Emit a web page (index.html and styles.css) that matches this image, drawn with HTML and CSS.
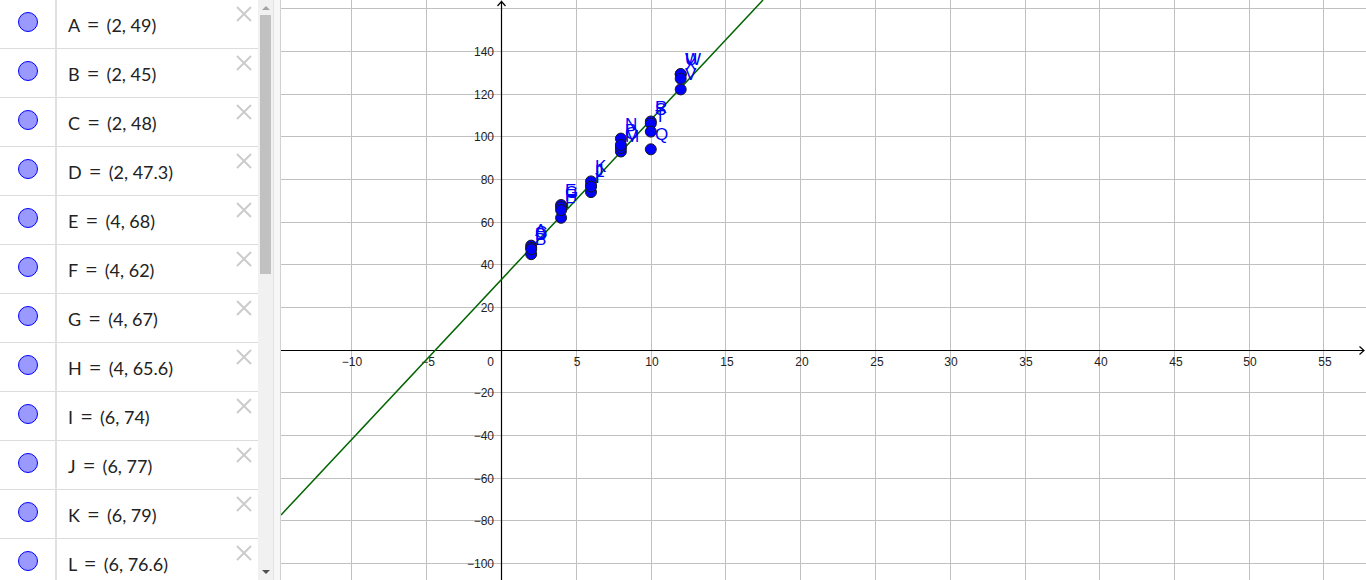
FILE: index.html
```html
<!DOCTYPE html>
<html lang="en">
<head>
<meta charset="utf-8">
<title>Scatter plot with best-fit line</title>
<link rel="stylesheet" href="styles.css">
</head>
<body>
<div class="app">
  <aside class="algebra">
    <ul class="list">
      <li class="row"><div class="marble-cell"><span class="marble"></span></div><div class="expr">A <i>=</i> (2, 49)</div><svg class="close" viewBox="0 0 16 16"><path d="M1 1L15 15M15 1L1 15"/></svg></li>
      <li class="row"><div class="marble-cell"><span class="marble"></span></div><div class="expr">B <i>=</i> (2, 45)</div><svg class="close" viewBox="0 0 16 16"><path d="M1 1L15 15M15 1L1 15"/></svg></li>
      <li class="row"><div class="marble-cell"><span class="marble"></span></div><div class="expr">C <i>=</i> (2, 48)</div><svg class="close" viewBox="0 0 16 16"><path d="M1 1L15 15M15 1L1 15"/></svg></li>
      <li class="row"><div class="marble-cell"><span class="marble"></span></div><div class="expr">D <i>=</i> (2, 47.3)</div><svg class="close" viewBox="0 0 16 16"><path d="M1 1L15 15M15 1L1 15"/></svg></li>
      <li class="row"><div class="marble-cell"><span class="marble"></span></div><div class="expr">E <i>=</i> (4, 68)</div><svg class="close" viewBox="0 0 16 16"><path d="M1 1L15 15M15 1L1 15"/></svg></li>
      <li class="row"><div class="marble-cell"><span class="marble"></span></div><div class="expr">F <i>=</i> (4, 62)</div><svg class="close" viewBox="0 0 16 16"><path d="M1 1L15 15M15 1L1 15"/></svg></li>
      <li class="row"><div class="marble-cell"><span class="marble"></span></div><div class="expr">G <i>=</i> (4, 67)</div><svg class="close" viewBox="0 0 16 16"><path d="M1 1L15 15M15 1L1 15"/></svg></li>
      <li class="row"><div class="marble-cell"><span class="marble"></span></div><div class="expr">H <i>=</i> (4, 65.6)</div><svg class="close" viewBox="0 0 16 16"><path d="M1 1L15 15M15 1L1 15"/></svg></li>
      <li class="row"><div class="marble-cell"><span class="marble"></span></div><div class="expr">I <i>=</i> (6, 74)</div><svg class="close" viewBox="0 0 16 16"><path d="M1 1L15 15M15 1L1 15"/></svg></li>
      <li class="row"><div class="marble-cell"><span class="marble"></span></div><div class="expr">J <i>=</i> (6, 77)</div><svg class="close" viewBox="0 0 16 16"><path d="M1 1L15 15M15 1L1 15"/></svg></li>
      <li class="row"><div class="marble-cell"><span class="marble"></span></div><div class="expr">K <i>=</i> (6, 79)</div><svg class="close" viewBox="0 0 16 16"><path d="M1 1L15 15M15 1L1 15"/></svg></li>
      <li class="row"><div class="marble-cell"><span class="marble"></span></div><div class="expr">L <i>=</i> (6, 76.6)</div><svg class="close" viewBox="0 0 16 16"><path d="M1 1L15 15M15 1L1 15"/></svg></li>
    </ul>
    <div class="scrollbar">
      <span class="arrow arrow-up"></span>
      <span class="thumb"></span>
      <span class="arrow arrow-down"></span>
    </div>
  </aside>
  <div class="splitter"></div>
  <main class="graphics">
    <svg class="plot" viewBox="281 0 1085 580">
      <path class="grid" d="M351.5 0V580M426.5 0V580M501.5 0V580M576.5 0V580M651.5 0V580M725.5 0V580M800.5 0V580M875.5 0V580M950.5 0V580M1025.5 0V580M1099.5 0V580M1174.5 0V580M1249.5 0V580M1323.5 0V580"/>
      <path class="grid" d="M281 8.5H1366M281 51.5H1366M281 94.5H1366M281 136.5H1366M281 179.5H1366M281 222.5H1366M281 264.5H1366M281 307.5H1366M281 392.5H1366M281 435.5H1366M281 478.5H1366M281 520.5H1366M281 563.5H1366"/>
      <path class="axis" d="M281 350.5H1364M1359.5 346.5L1364 350.5L1359.5 354.5"/>
      <path class="axis" d="M501.5 580V1.5M497.5 6L501.5 1.5L505.5 6"/>
      <g class="ticks ticks-x">
        <text x="352" y="366">−10</text><text x="428" y="366">−5</text><text x="577" y="366">5</text><text x="652" y="366">10</text><text x="727" y="366">15</text><text x="802" y="366">20</text><text x="877" y="366">25</text><text x="951" y="366">30</text><text x="1026" y="366">35</text><text x="1101" y="366">40</text><text x="1176" y="366">45</text><text x="1250" y="366">50</text><text x="1325" y="366">55</text>
      </g>
      <g class="ticks ticks-y">
        <text x="494" y="366">0</text><text x="494" y="56">140</text><text x="494" y="99">120</text><text x="494" y="141">100</text><text x="494" y="184">80</text><text x="494" y="227">60</text><text x="494" y="269">40</text><text x="494" y="312">20</text><text x="494" y="397">−20</text><text x="494" y="440">−40</text><text x="494" y="483">−60</text><text x="494" y="525">−80</text><text x="494" y="568">−100</text>
      </g>
      <line class="fit" x1="281" y1="515" x2="763" y2="0"/>
      <g class="labels">
        <text x="535" y="236">A</text><text x="535" y="245">B</text><text x="535" y="238">C</text><text x="535" y="240">D</text>
        <text x="565" y="196">E</text><text x="565" y="208">F</text><text x="565" y="198">G</text><text x="565" y="201">H</text>
        <text x="595" y="183">I</text><text x="595" y="176">J</text><text x="595" y="172">K</text><text x="595" y="177">L</text>
        <text x="625" y="142">M</text><text x="625" y="130">N</text><text x="625" y="139">O</text><text x="625" y="136">P</text>
        <text x="655" y="140">Q</text><text x="655" y="113">R</text><text x="655" y="115">S</text><text x="655" y="122">T</text>
        <text x="685" y="65">U</text><text x="685" y="80">V</text><text x="685" y="65">W</text><text x="685" y="70">X</text>
      </g>
      <g class="points">
        <circle cx="531.2" cy="245.6" r="5.5"/><circle cx="531.2" cy="254.2" r="5.5"/><circle cx="531.2" cy="247.8" r="5.5"/><circle cx="531.2" cy="249.3" r="5.5"/>
        <circle cx="561.1" cy="205" r="5.5"/><circle cx="561.1" cy="217.8" r="5.5"/><circle cx="561.1" cy="207.1" r="5.5"/><circle cx="561.1" cy="210.1" r="5.5"/>
        <circle cx="591" cy="192.1" r="5.5"/><circle cx="591" cy="185.7" r="5.5"/><circle cx="591" cy="181.4" r="5.5"/><circle cx="591" cy="186.6" r="5.5"/>
        <circle cx="620.9" cy="151.5" r="5.5"/><circle cx="620.9" cy="138.6" r="5.5"/><circle cx="620.9" cy="148" r="5.5"/><circle cx="620.9" cy="145" r="5.5"/>
        <circle cx="650.8" cy="149.3" r="5.5"/><circle cx="650.8" cy="121.5" r="5.5"/><circle cx="650.8" cy="123.6" r="5.5"/><circle cx="650.8" cy="131.6" r="5.5"/>
        <circle cx="680.7" cy="74.4" r="5.5"/><circle cx="680.7" cy="89.4" r="5.5"/><circle cx="680.7" cy="74" r="5.5"/><circle cx="680.7" cy="78.7" r="5.5"/>
      </g>
    </svg>
  </main>
</div>
</body>
</html>
```
FILE: styles.css
```css
html, body {
  margin: 0;
  height: 100%;
  overflow: hidden;
  background: #fff;
}

.app {
  display: flex;
  height: 580px;
  width: 1366px;
  overflow: hidden;
}

.algebra {
  display: flex;
  width: 273px;
  flex: none;
  height: 100%;
  overflow: hidden;
}

.list {
  list-style: none;
  margin: 0;
  padding: 0;
  width: 258px;
  flex: none;
}

.row {
  display: flex;
  height: 48px;
  border-bottom: 1px solid #dcdcdc;
}

.marble-cell {
  width: 57px;
  flex: none;
  box-sizing: border-box;
  border-right: 2px solid #e0e0e0;
  padding-top: 12px;
  display: flex;
  justify-content: center;
  align-items: flex-start;
}

.marble {
  display: block;
  width: 20px;
  height: 20px;
  box-sizing: border-box;
  border: 1px solid #0000ff;
  border-radius: 50%;
  background: #9999ff;
  margin-left: 1px;
}

.expr {
  flex: 1;
  padding: 14px 0 0 11px;
  font: 18px/22px "Lato", "Liberation Sans", sans-serif;
  color: #222;
  white-space: pre;
}

.expr i {
  font-style: normal;
  font-size: 22px;
  line-height: 0;
  margin: 0 2.5px;
}

.close {
  flex: none;
  width: 16px;
  height: 16px;
  margin: 6px 6px 0 0;
  fill: none;
  stroke: #cccccc;
  stroke-width: 2;
}

.scrollbar {
  width: 15px;
  flex: none;
  background: #f1f1f1;
  display: flex;
  flex-direction: column;
  align-items: center;
  height: 100%;
  box-sizing: border-box;
  padding-top: 6px;
  padding-bottom: 6px;
}

.arrow {
  display: block;
  width: 0;
  height: 0;
  border-left: 4px solid transparent;
  border-right: 4px solid transparent;
  flex: none;
}

.arrow-up {
  border-bottom: 4px solid #a3a3a3;
}

.arrow-down {
  border-top: 4px solid #505050;
  margin-top: auto;
}

.thumb {
  display: block;
  width: 11px;
  height: 259px;
  margin-top: 5px;
  background: #c1c1c1;
  flex: none;
}

.splitter {
  width: 8px;
  flex: none;
  box-sizing: border-box;
  background: #f7f7f7;
  border-left: 1px solid #e4e4e4;
  border-right: 1px solid #d2d2d2;
}

.graphics {
  flex: 1;
  min-width: 0;
}

.plot {
  display: block;
  width: 1085px;
  height: 580px;
}

.grid {
  fill: none;
  stroke: #c0c0c0;
  stroke-width: 1;
}

.axis {
  fill: none;
  stroke: #000;
  stroke-width: 1.2;
}

.ticks {
  font: 12px "Liberation Sans", Arial, sans-serif;
  fill: #222;
}

.ticks-x {
  text-anchor: middle;
}

.ticks-y {
  text-anchor: end;
}

.fit {
  stroke: #006400;
  stroke-width: 1.5;
}

.points circle {
  fill: #0000ff;
  stroke: #1a1a1a;
  stroke-width: 1;
}

.labels {
  font: 17px "Liberation Sans", Arial, sans-serif;
  fill: #0000ff;
}
```
